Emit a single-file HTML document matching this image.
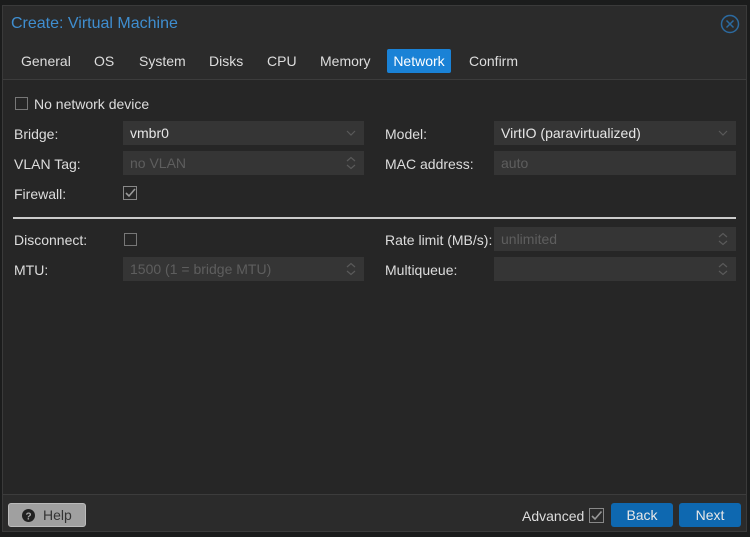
<!DOCTYPE html>
<html><head><style>
*{box-sizing:border-box;margin:0;padding:0}
body{width:750px;height:537px;background:#1b1c1c;font-family:"Liberation Sans",sans-serif;font-size:14px;color:#e0e0e0;position:relative;overflow:hidden}
.dlg{position:absolute;left:2px;top:5px;width:745px;height:527px;background:#2b2b2b;border:1px solid #3a3a3a}
.abs{position:absolute}
.title{left:11px;top:15px;color:#3f8ed0;font-size:16px}
.tab{top:53px;font-size:14px;color:#ddd}
.net{left:387px;top:49px;width:64px;height:24px;background:#1a82d6;color:#fff;border-radius:2px;text-align:center;line-height:24px}
.panel{left:3px;top:79px;width:743px;height:416px;background:#262626;border-top:1px solid #3c3c3c;border-bottom:1px solid #3c3c3c}
.lbl{font-size:14px;color:#ddd}
.inp{height:24px;background:#353535;font-size:14px;line-height:24px;padding-left:7px;color:#5e5e5e}
.inp.v{color:#e6e6e6}
.inp svg{position:absolute;right:6px;top:5px}
.cb{width:13px;height:13px;border:1px solid #777}
.sep{left:13px;top:217px;width:723px;height:2px;background:#ccc}
.btn{top:503px;height:24px;border-radius:3px;text-align:center;line-height:24px;font-size:14px}
</style></head><body>
<div class="dlg"></div>
<div class="abs title">Create: Virtual Machine</div>
<svg class="abs" style="left:720px;top:14px" width="20" height="20"><circle cx="10" cy="10" r="8.5" fill="none" stroke="#2c6aa0" stroke-width="1.5"/><path d="M6.5 6.5L13.5 13.5M13.5 6.5L6.5 13.5" stroke="#2c6aa0" stroke-width="1.5"/></svg>
<div class="abs tab" style="left:21px">General</div>
<div class="abs tab" style="left:94px">OS</div>
<div class="abs tab" style="left:139px">System</div>
<div class="abs tab" style="left:209px">Disks</div>
<div class="abs tab" style="left:267px">CPU</div>
<div class="abs tab" style="left:320px">Memory</div>
<div class="abs net">Network</div>
<div class="abs tab" style="left:469px">Confirm</div>
<div class="abs panel"></div>
<div class="abs cb" style="left:15px;top:97px"></div>
<div class="abs lbl" style="left:34px;top:96px">No network device</div>
<div class="abs lbl" style="left:14px;top:126px">Bridge:</div>
<div class="abs inp v" style="left:123px;top:121px;width:241px">vmbr0<svg width="14" height="14"><path d="M3 5L7 9L11 5" fill="none" stroke="#5a5a5a" stroke-width="1.2"/></svg></div>
<div class="abs lbl" style="left:14px;top:156px">VLAN Tag:</div>
<div class="abs inp" style="left:123px;top:151px;width:241px">no VLAN<svg width="14" height="14"><path d="M3 5L7 1.5L11 5M3 9L7 12.5L11 9" fill="none" stroke="#5a5a5a" stroke-width="1.2"/></svg></div>
<div class="abs lbl" style="left:14px;top:186px">Firewall:</div>
<svg class="abs" style="left:123px;top:186px" width="15" height="15"><rect x="0.5" y="0.5" width="13" height="13" fill="none" stroke="#888"/><path d="M3 7L6 10L12 3" fill="none" stroke="#999" stroke-width="1.6"/></svg>
<div class="abs lbl" style="left:385px;top:126px">Model:</div>
<div class="abs inp v" style="left:494px;top:121px;width:242px">VirtIO (paravirtualized)<svg width="14" height="14"><path d="M3 5L7 9L11 5" fill="none" stroke="#5a5a5a" stroke-width="1.2"/></svg></div>
<div class="abs lbl" style="left:385px;top:156px">MAC address:</div>
<div class="abs inp" style="left:494px;top:151px;width:242px">auto</div>
<div class="abs sep"></div>
<div class="abs lbl" style="left:14px;top:232px">Disconnect:</div>
<div class="abs cb" style="left:124px;top:233px"></div>
<div class="abs lbl" style="left:14px;top:262px">MTU:</div>
<div class="abs inp" style="left:123px;top:257px;width:241px">1500 (1 = bridge MTU)<svg width="14" height="14"><path d="M3 5L7 1.5L11 5M3 9L7 12.5L11 9" fill="none" stroke="#5a5a5a" stroke-width="1.2"/></svg></div>
<div class="abs lbl" style="left:385px;top:232px">Rate limit (MB/s):</div>
<div class="abs inp" style="left:494px;top:227px;width:242px">unlimited<svg width="14" height="14"><path d="M3 5L7 1.5L11 5M3 9L7 12.5L11 9" fill="none" stroke="#5a5a5a" stroke-width="1.2"/></svg></div>
<div class="abs lbl" style="left:385px;top:262px">Multiqueue:</div>
<div class="abs inp" style="left:494px;top:257px;width:242px"><svg width="14" height="14"><path d="M3 5L7 1.5L11 5M3 9L7 12.5L11 9" fill="none" stroke="#5a5a5a" stroke-width="1.2"/></svg></div>
<div class="abs btn" style="left:8px;width:78px;background:#a0a0a0;color:#333;border:1px solid #bbb;line-height:22px"><svg width="13" height="13" style="vertical-align:-2px"><circle cx="6.5" cy="6.5" r="6.5" fill="#222"/><text x="6.5" y="10.5" text-anchor="middle" font-size="10" font-weight="bold" fill="#aaa" font-family="Liberation Sans">?</text></svg>&nbsp; Help</div>
<div class="abs lbl" style="left:522px;top:508px">Advanced</div>
<svg class="abs" style="left:589px;top:508px" width="16" height="16"><rect x="0.5" y="0.5" width="14" height="14" fill="none" stroke="#888"/><path d="M3 8L6 11L12.5 3.5" fill="none" stroke="#999" stroke-width="1.6"/></svg>
<div class="abs btn" style="left:611px;width:62px;background:#0e68b0;color:#e8e8e8">Back</div>
<div class="abs btn" style="left:679px;width:62px;background:#0e68b0;color:#e8e8e8">Next</div>
</body></html>
